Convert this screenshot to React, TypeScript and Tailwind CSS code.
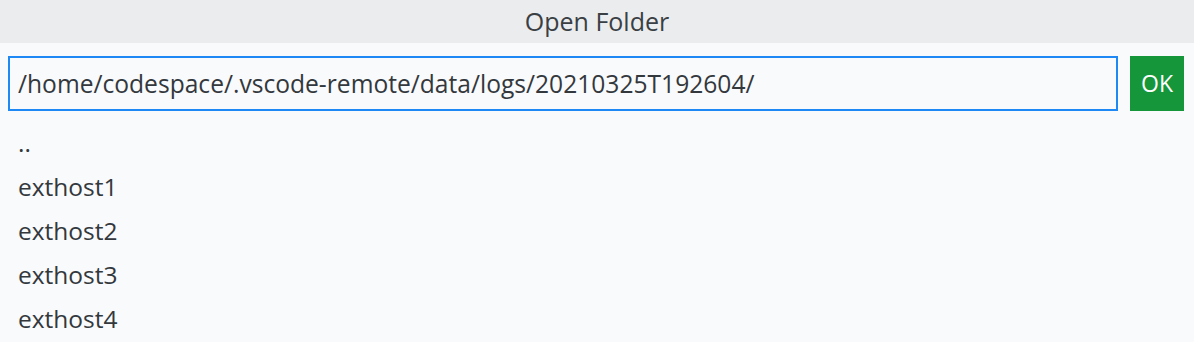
import React from "react";

const entries = ["..", "exthost1", "exthost2", "exthost3", "exthost4"];

export default function App() {
  return (
    <div className="w-[1194px] h-[342px] overflow-hidden bg-[#f9fafc] text-[#33383d] font-['Open_Sans',sans-serif]">
      <div className="h-[43px] bg-[#ebecee] flex items-center justify-center text-[25px] text-[#3a3f44]">
        Open Folder
      </div>
      <div className="flex items-center gap-3 pl-2 pr-[10px] pt-[13px]">
        <input
          readOnly
          value="/home/codespace/.vscode-remote/data/logs/20210325T192604/"
          className="flex-1 h-[55px] border-2 border-[#1e88f5] bg-[#f9fafc] px-2 text-[24.6px] text-[#33383d] outline-none"
        />
        <button className="w-[54px] h-[55px] bg-[#16963a] text-white text-[23px]">
          OK
        </button>
      </div>
      <ul className="pt-[10px] pl-[18px] text-[24.5px]">
        {entries.map((e) => (
          <li key={e} className="h-[44px] flex items-center">
            {e}
          </li>
        ))}
      </ul>
    </div>
  );
}
